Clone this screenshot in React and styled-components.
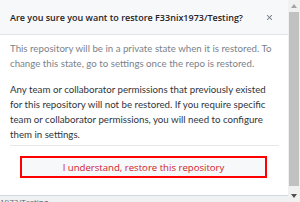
import styled, { createGlobalStyle } from 'styled-components'

const Global = createGlobalStyle`
  html, body { margin: 0; padding: 0; background: #fff; }
  body { width: 300px; height: 202px; overflow: hidden; }
`

const Page = styled.div`
  display: flex;
  width: 300px;
  height: 202px;
`

const Main = styled.div`
  flex: 1;
  display: flex;
  flex-direction: column;
  min-width: 0;
`

const Dialog = styled.div`
  flex: 1;
  min-height: 0;
  overflow: hidden;
  background: #fff;
  display: flex;
  flex-direction: column;
`

const Header = styled.div`
  height: 34px;
  flex: none;
  display: flex;
  align-items: center;
  justify-content: space-between;
  padding: 0 10px;
  background: #f6f8fa;
  border-bottom: 1px solid #e1e4e8;
`

const Title = styled.h1`
  margin: 0;
  font-family: 'Open Sans', sans-serif;
  font-size: 9px;
  font-weight: 600;
  color: #1f2328;
  white-space: nowrap;
`

const Close = styled.button`
  border: 0;
  background: none;
  padding: 0;
  margin-right: 4px;
  display: flex;
  color: #6e7781;
`

const Body = styled.div`
  padding: 6px 10px 3px;
  font-family: 'Lato', sans-serif;
  font-size: 9.7px;
  line-height: 15px;
  font-weight: 400;
`

const Para = styled.p`
  margin: 0 0 11px;
  color: ${(p) => (p.muted ? '#7b828a' : '#2f353b')};
  &:last-child { margin-bottom: 0; }
`

const Divider = styled.hr`
  margin: 0 9px 0 10px;
  border: 0;
  border-top: 1px solid #e6e8eb;
`

const Action = styled.div`
  padding: 10px 21px 0 20px;
`

const Button = styled.button`
  display: block;
  width: 100%;
  height: 22px;
  box-sizing: border-box;
  border: 2px solid #ff0000;
  background: #f6f8fa;
  color: #cf222e;
  font-family: 'Open Sans', sans-serif;
  font-size: 9.6px;
  font-weight: 500;
  padding: 0;
  cursor: pointer;
`

const Strip = styled.div`
  height: 6px;
  flex: none;
  border-top: 1px solid #d0d7de;
  background: #f0f1f2;
  overflow: hidden;
  font-family: 'Open Sans', sans-serif;
  font-size: 8px;
  line-height: 12px;
  color: #57606a;
  white-space: nowrap;
`

const Scrollbar = styled.div`
  width: 12px;
  display: flex;
  flex-direction: column;
  background: #f1f1f1;
`

const Arrow = styled.div`
  height: 12px;
  display: flex;
  align-items: center;
  justify-content: center;
`

const Thumb = styled.div`
  flex: 1;
  margin: 0 1px;
  background: #c1c1c1;
`

const Track = styled.div`
  height: 4px;
`

export default function App() {
  return (
    <Page>
      <Global />
      <Main>
        <Dialog>
          <Header>
            <Title>Are you sure you want to restore F33nix1973/Testing?</Title>
            <Close aria-label="Close">
              <svg width="9" height="9" viewBox="0 0 16 16" fill="currentColor">
                <path d="M3.72 3.72a.75.75 0 0 1 1.06 0L8 6.94l3.22-3.22a.75.75 0 1 1 1.06 1.06L9.06 8l3.22 3.22a.75.75 0 1 1-1.06 1.06L8 9.06l-3.22 3.22a.75.75 0 0 1-1.06-1.06L6.94 8 3.72 4.78a.75.75 0 0 1 0-1.06Z" />
              </svg>
            </Close>
          </Header>
          <Body>
            <Para muted>
              This repository will be in a private state when it is restored. To change this state, go to settings once the repo is restored.
            </Para>
            <Para>
              Any team or collaborator permissions that previously existed for this repository will not be restored. If you require specific team or collaborator permissions, you will need to configure them in settings.
            </Para>
          </Body>
          <Divider />
          <Action>
            <Button>I understand, restore this repository</Button>
          </Action>
        </Dialog>
        <Strip>1973/Testing</Strip>
      </Main>
      <Scrollbar>
        <Arrow>
          <svg width="6" height="4" viewBox="0 0 6 4"><path d="M0 4 3 0 6 4Z" fill="#a3a3a3" /></svg>
        </Arrow>
        <Thumb />
        <Track />
        <Arrow>
          <svg width="6" height="4" viewBox="0 0 6 4"><path d="M0 0 3 4 6 0Z" fill="#505050" /></svg>
        </Arrow>
      </Scrollbar>
    </Page>
  )
}
